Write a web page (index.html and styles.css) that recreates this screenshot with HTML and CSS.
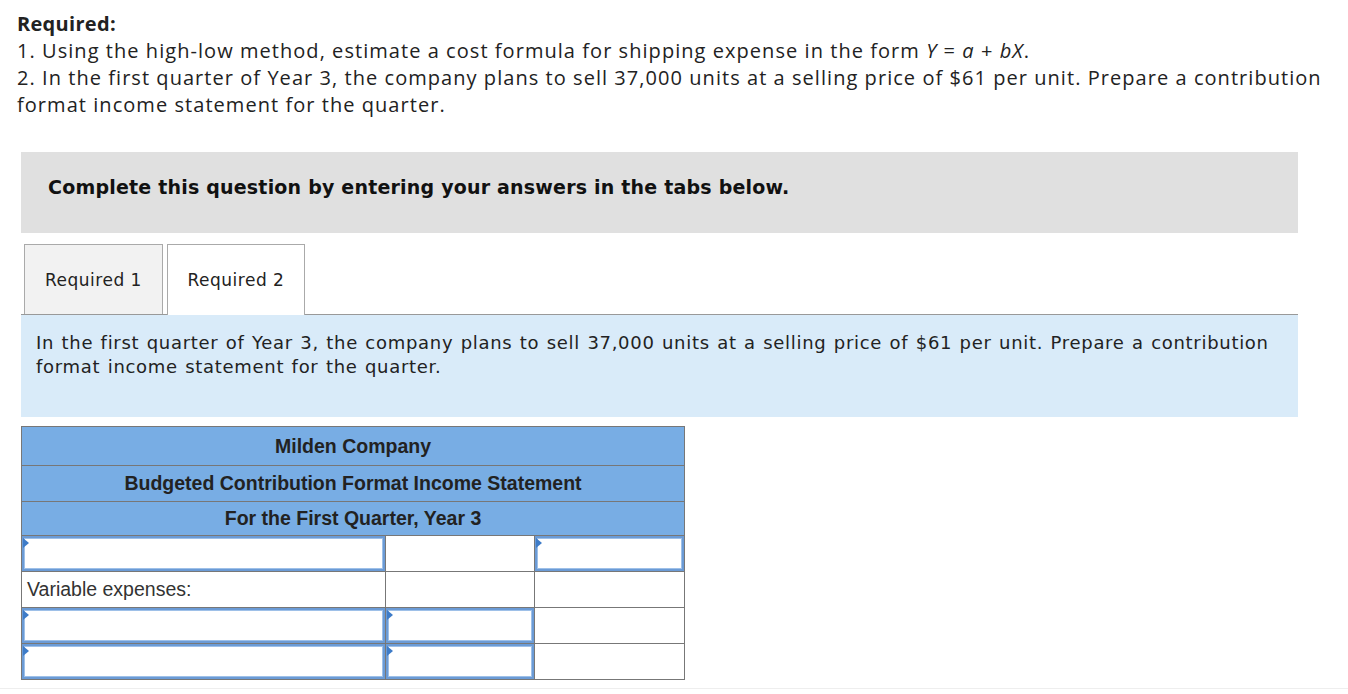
FILE: index.html
```html
<!DOCTYPE html>
<html>
<head>
<meta charset="utf-8">
<title>Required 2</title>
<link rel="stylesheet" href="styles.css">
</head>
<body>
<div class="prompt">
	<p class="req-title">Required:</p>
	<p>1. Using the high-low method, estimate a cost formula for shipping expense in the form <i>Y</i> = <i>a</i> + <i>bX</i>.</p>
	<p>2. In the first quarter of Year 3, the company plans to sell 37,000 units at a selling price of $61 per unit. Prepare a contribution format income statement for the quarter.</p>
</div>

<div class="instructions">Complete this question by entering your answers in the tabs below.</div>

<div class="tabs">
	<div class="tab">Required 1</div>
	<div class="tab active">Required 2</div>
</div>
<div class="panel">In the first quarter of Year 3, the company plans to sell 37,000 units at a selling price of $61 per unit. Prepare a contribution format income statement for the quarter.</div>

<div class="sheet">
<table class="statement">
	<tr class="head"><th colspan="3" class="h1">Milden Company</th></tr>
	<tr class="head"><th colspan="3" class="h2">Budgeted Contribution Format Income Statement</th></tr>
	<tr class="head"><th colspan="3" class="h3">For the First Quarter, Year 3</th></tr>
	<tr>
		<td class="c1 in"><div class="box"><span class="mark"></span></div></td>
		<td class="c2"></td>
		<td class="c3 in"><div class="box"><span class="mark"></span></div></td>
	</tr>
	<tr>
		<td class="c1 label">Variable expenses:</td>
		<td class="c2"></td>
		<td class="c3"></td>
	</tr>
	<tr>
		<td class="c1 in"><div class="box"><span class="mark"></span></div></td>
		<td class="c2 in"><div class="box"><span class="mark"></span></div></td>
		<td class="c3"></td>
	</tr>
	<tr>
		<td class="c1 in"><div class="box"><span class="mark"></span></div></td>
		<td class="c2 in"><div class="box"><span class="mark"></span></div></td>
		<td class="c3"></td>
	</tr>
	<tr>
		<td class="c1 in"><div class="box"><span class="mark"></span></div></td>
		<td class="c2 in"><div class="box"><span class="mark"></span></div></td>
		<td class="c3"></td>
	</tr>
</table>
</div>
<div class="page-end"></div>
</body>
</html>
```

FILE: styles.css
```css
*{ margin:0; padding:0;}
body{ background:#fff; color:#222; overflow:hidden; height:694px;}
.prompt{ font:20px/27px "Open Sans",Lato,sans-serif; letter-spacing:1.05px; color:#222; padding:10px 18px 0 17px;}
.prompt p{ margin:0;}
.prompt .req-title{ font-weight:bold; letter-spacing:0.3px;}
.prompt i{ font-style:italic;}

.instructions{ margin:34px 50px 0 21px; height:81px; box-sizing:border-box; background:#e0e0e0; padding:21px 0 0 27px; font:bold 19px/28px "DejaVu Sans",Verdana,sans-serif; letter-spacing:0.2px; color:#111;}

.tabs{ display:flex; margin:11px 50px 0 21px; border-bottom:1px solid #999; height:71px; box-sizing:border-box; padding-left:3px; gap:4px;}
.tab{ width:139px; height:70px; box-sizing:border-box; border:1px solid #aaa; border-bottom:none; background:#f2f2f2; font:17px/70px "DejaVu Sans",Verdana,sans-serif; letter-spacing:0.5px; text-align:center; color:#222;}
.tab.active{ background:#fff; height:71px; width:138px;}

.panel{ margin:0 50px 0 21px; height:102px; box-sizing:border-box; background:#d9ebf9; padding:16px 0 0 15px; font:18px/24px "DejaVu Sans",Verdana,sans-serif; letter-spacing:0.7px; word-spacing:1px; color:#222;}

.sheet{ margin:9px 0 0 21px; height:254px; overflow:hidden;}
.statement{ border-collapse:collapse; width:664px; font-family:"Liberation Sans",Arial,sans-serif; font-size:19.5px;}
.statement th{ background:#78ade4; border:1px solid #777; font-weight:bold; color:#222; text-align:center; padding:0;}
.statement .h1{ height:38px;}
.statement .h2{ height:35px;}
.statement .h3{ height:33px;}
.statement td{ border:1px solid #777; height:35px; padding:0; background:#fff;}
.statement .c1{ width:359px;}
.statement .c2{ width:149px;}
.statement .c3{ width:150px;}
.statement .label{ padding-left:5px; color:#333;}
.statement .in{ position:relative;}
.box{ height:35px; box-sizing:border-box; border:2px solid #6b9bd6; box-shadow:inset 0 0 0 1px #9ec0e8; background:#fff;}
.mark{ position:absolute; left:1px; top:2px; width:0; height:0; border-top:5px solid transparent; border-bottom:5px solid transparent; border-left:6px solid #3e7cc8;}

.page-end{ position:absolute; left:0; right:0; top:688px; border-top:1px solid #eee;}
```
